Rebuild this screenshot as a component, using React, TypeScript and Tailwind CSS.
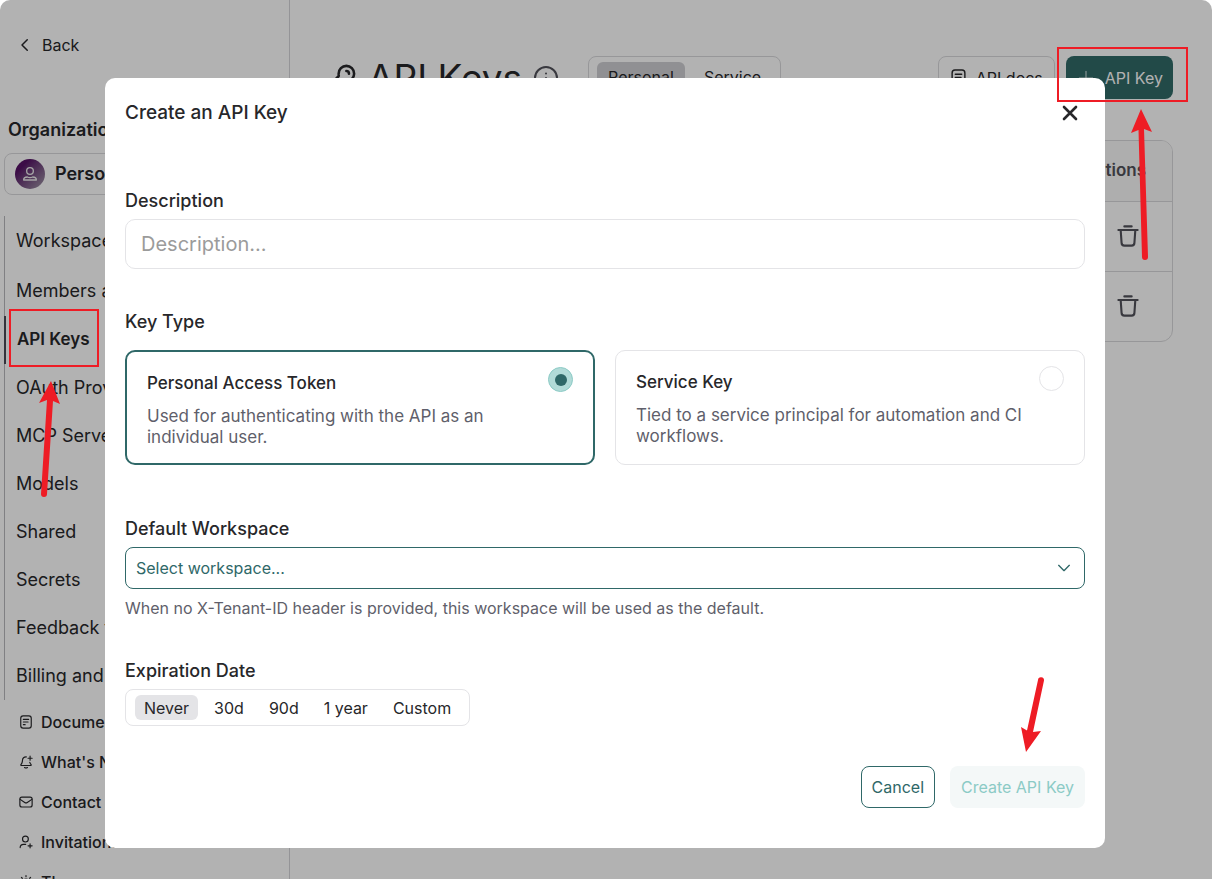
import { useState } from 'react';
import type { ReactNode } from 'react';
import clsx from 'clsx';

interface IconProps {
  className?: string;
  strokeWidth?: number;
  children: ReactNode;
}

function Icon({ className, strokeWidth = 2, children }: IconProps) {
  return (
    <svg
      viewBox="0 0 24 24"
      fill="none"
      stroke="currentColor"
      strokeWidth={strokeWidth}
      strokeLinecap="round"
      strokeLinejoin="round"
      aria-hidden="true"
      className={clsx('shrink-0', className)}
    >
      {children}
    </svg>
  );
}

// Icon shapes, all on a 24 grid
const shapes = {
  chevronLeft: <path d="M15 5l-7 7 7 7" />,
  chevronDown: <path d="M4 8l8 8 8-8" />,
  plus: <path d="M12 4v16M4 12h16" />,
  close: <path d="M4 4l16 16M20 4L4 20" />,
  key: (
    <path d="M17 9a2 2 0 0 0-2-2M15 15a6 6 0 1 0-6-6c0 .27.02.54.05.81.06.43.09.65.07.79-.02.14-.05.22-.12.34-.06.12-.18.24-.42.48L3.47 16.53c-.17.17-.26.26-.32.36-.06.09-.1.19-.12.29-.03.12-.03.24-.03.48V19.4c0 .56 0 .84.11 1.05.1.19.25.34.44.44.21.11.49.11 1.05.11H7v-2h2v-2h2l1.58-1.58c.24-.24.36-.36.48-.42.13-.07.2-.1.35-.12.13-.02.35.01.78.07.27.03.54.05.81.05z" />
  ),
  info: (
    <>
      <circle cx="12" cy="12" r="11" />
      <path d="M12 17v-5M12 7.5h.01" />
    </>
  ),
  doc: (
    <>
      <rect x="3" y="1.5" width="18" height="21" rx="4" />
      <path d="M7.5 7.5h9M7.5 12h8M7.5 16.5h3" />
    </>
  ),
  bell: (
    <>
      <path d="M12.5 3.2C8.5 3 6 5.5 6 9c0 4-1.2 5.5-2.5 7.2-.7 1-.3 1.8.8 1.8h15.4c1.1 0 1.5-.8.8-1.8-.9-1.2-1.6-2.2-2-3.7" />
      <path d="M9.5 21.5c1.5 1 3.5 1 5 0M19 2v7M15.5 5.5h7" />
    </>
  ),
  mail: (
    <>
      <rect x="1.5" y="3.5" width="21" height="17" rx="3.5" />
      <path d="M2 7.5l7.8 5.4c1.5 1 2.9 1 4.4 0L22 7.5" />
    </>
  ),
  userPlus: (
    <>
      <circle cx="11" cy="7" r="5" />
      <path d="M2 21.5c0-4 2-5.5 6-5.5h3.5M19 15v7M15.5 18.5h7" />
    </>
  ),
  sun: (
    <>
      <circle cx="12" cy="12" r="5" />
      <path d="M12 1v2M12 21v2M4.2 4.2l1.4 1.4M18.4 18.4l1.4 1.4M1 12h2M21 12h2M4.2 19.8l1.4-1.4M18.4 5.6l1.4-1.4" />
    </>
  ),
  user: (
    <>
      <circle cx="12" cy="7.5" r="5" />
      <path d="M2.5 21c0-3 3-4.5 5.5-4.5 1.3.7 2.5 1 4 1s2.700-.3 4-1c2.500 0 5.500 1.500 5.500 4.500z" />
    </>
  ),
  trash: <path d="M8 1.5h8M1.5 5.5h21M4 5.5l1 14c.1 2 1 3 3 3h8c2 0 2.900-1 3-3l1-14" />,
};

const navItems = [
  { label: 'Workspaces', height: 'h-[50px]' },
  { label: 'Members and roles', height: 'h-[50px]' },
  { label: 'API Keys', height: 'h-12', active: true },
  { label: 'OAuth Providers', height: 'h-12' },
  { label: 'MCP Servers', height: 'h-12' },
  { label: 'Models', height: 'h-12' },
  { label: 'Shared', height: 'h-12' },
  { label: 'Secrets', height: 'h-12' },
  { label: 'Feedback templates', height: 'h-12' },
  { label: 'Billing and usage', height: 'h-12' },
];

const footerLinks = [
  { label: 'Documentation', icon: shapes.doc },
  { label: "What's New", icon: shapes.bell },
  { label: 'Contact Support', icon: shapes.mail },
  { label: 'Invitations', icon: shapes.userPlus },
  { label: 'Theme', icon: shapes.sun },
];

const keyTypes = [
  {
    id: 'personal',
    title: 'Personal Access Token',
    text: 'Used for authenticating with the API as an individual user.',
  },
  {
    id: 'service',
    title: 'Service Key',
    text: 'Tied to a service principal for automation and CI workflows.',
  },
];

const expirations = ['Never', '30d', '90d', '1 year', 'Custom'];

function Sidebar() {
  return (
    <aside className="flex w-[290px] shrink-0 flex-col border-r border-[#d4d4d8] pl-1">
      <a href="#back" className="mt-[33px] flex h-6 shrink-0 items-center gap-2 pl-3 text-base">
        <Icon className="size-[18px]">{shapes.chevronLeft}</Icon>
        Back
      </a>
      <h2 className="mt-[61px] pl-1 text-lg leading-6 font-semibold">Organization</h2>
      <button
        type="button"
        className="mt-[11px] mr-4 flex h-[42px] shrink-0 items-center gap-[10px] rounded-lg border border-[#d9d9dc] pl-[10px] text-lg font-semibold"
      >
        <span className="flex size-[30px] items-center justify-center rounded-full bg-linear-to-br from-[#561266] from-25% to-[#a09aa6] text-[#eee]">
          <Icon className="size-4">{shapes.user}</Icon>
        </span>
        Personal
      </button>

      <nav className="mt-[21px] flex shrink-0 flex-col border-l border-[#b8b8bc]">
        {navItems.map((item) => (
          <a
            key={item.label}
            href="#nav"
            className={clsx(
              'flex shrink-0 items-center',
              item.height,
              item.active
                ? '-ml-px border-l-2 border-[#4a4a55] pl-[11px] text-[17px] font-semibold'
                : 'pl-[11px] text-lg',
            )}
          >
            {item.label}
          </a>
        ))}
      </nav>

      <div className="flex shrink-0 flex-col pt-0.5">
        {footerLinks.map((link) => (
          <a key={link.label} href="#link" className="flex h-10 items-center gap-2 pl-[15px] text-base font-medium">
            <Icon className="size-[14px]">{link.icon}</Icon>
            {link.label}
          </a>
        ))}
      </div>
    </aside>
  );
}

function KeysPage() {
  return (
    <main className="min-w-0 flex-1 pt-14 pr-[39px] pl-[37px]">
      <header className="flex h-[43px] items-center">
        <Icon className="size-[31px]">{shapes.key}</Icon>
        <h1 className="ml-[10px] text-[37px] leading-10">API Keys</h1>
        <Icon className="ml-3 size-6 text-[#52525b]">{shapes.info}</Icon>
        <div className="ml-[30px] flex h-[41px] items-center gap-2 self-start rounded-lg border border-[#d9d9dc] px-2 text-base">
          <button type="button" className="h-[30px] rounded-md bg-[#cfcfd3] px-[11px]">Personal</button>
          <button type="button" className="h-[30px] px-[11px]">Service</button>
        </div>
        <div className="ml-auto flex gap-[11px] text-base">
          <button type="button" className="flex h-[43px] items-center gap-[9px] rounded-lg border border-[#d9d9dc] px-[11px]">
            <Icon className="size-[17px]">{shapes.doc}</Icon>
            API docs
          </button>
          <button type="button" className="flex h-[43px] items-center gap-[9px] rounded-lg bg-[#316a68] px-[10px] text-white">
            <Icon className="size-5" strokeWidth={1}>{shapes.plus}</Icon>
            API Key
          </button>
        </div>
      </header>

      <div className="mt-[41px] overflow-hidden rounded-xl border border-[#d9d9dc]">
        <table className="w-full text-[17px]">
          <thead>
            <tr className="h-[60px] bg-[#fafafa] text-[#52525b]">
              <td />
              <th scope="col" className="w-[90px] pr-[26px] text-right font-semibold">Actions</th>
            </tr>
          </thead>
          <tbody>
            {[1, 2].map((row) => (
              <tr key={row} className="h-[70px] border-t border-[#d9d9dc]">
                <td />
                <td className="pr-[33px] text-[#52525b]">
                  <button type="button" aria-label="Delete key" className="ml-auto block">
                    <Icon className="size-[22px]" strokeWidth={2.3}>{shapes.trash}</Icon>
                  </button>
                </td>
              </tr>
            ))}
          </tbody>
        </table>
      </div>
    </main>
  );
}

function CreateKeyDialog() {
  const [keyType, setKeyType] = useState('personal');
  const [expiration, setExpiration] = useState('Never');

  return (
    <form
      role="dialog"
      aria-labelledby="dialog-title"
      className="flex w-full max-w-[1000px] flex-col rounded-[10px] bg-white px-5 pt-5 pb-10 text-[#27272a]"
    >
      <div className="flex h-[30px] items-center justify-between">
        <h2 id="dialog-title" className="text-[19px] leading-[30px] font-medium">Create an API Key</h2>
        <button type="button" aria-label="Close" className="mr-[6px]">
          <Icon className="size-[18px]" strokeWidth={3.5}>{shapes.close}</Icon>
        </button>
      </div>

      <label htmlFor="description" className="mt-[59px] text-lg font-medium">Description</label>
      <input
        id="description"
        placeholder="Description..."
        className="mt-1 h-[50px] rounded-[10px] border border-[#e4e4e7] px-[15px] text-xl placeholder:text-[#9b9b9b]"
      />

      <fieldset className="mt-[39px]">
        <legend className="text-lg font-medium">Key Type</legend>
        <div className="mt-[14px] grid grid-cols-2 gap-5">
          {keyTypes.map((type) => (
            <label
              key={type.id}
              className={clsx(
                'flex h-[115px] rounded-[10px] px-5 pt-[15px]',
                keyType === type.id ? 'border-2 border-[#2f6868]' : 'border border-[#e4e4e7]',
              )}
            >
              <span className="flex-1 pt-[3px]">
                <span className="block text-[17px] leading-[26px] font-medium">{type.title}</span>
                <span className="mt-[10px] block text-[17px] leading-[21px] text-[#5f5f6b]">{type.text}</span>
              </span>
              <input
                type="radio"
                name="key-type"
                checked={keyType === type.id}
                onChange={() => setKeyType(type.id)}
                className="flex size-[25px] appearance-none items-center justify-center rounded-full border border-[#e4e4e7] before:size-3 before:rounded-full checked:border-[#8ccbc6] checked:bg-[#b2dbd8] checked:before:bg-[#2f6868]"
              />
            </label>
          ))}
        </div>
      </fieldset>

      <label htmlFor="workspace" className="mt-[50px] text-lg font-medium">Default Workspace</label>
      <div className="relative mt-1 flex">
        <select
          id="workspace"
          className="h-[42px] w-full appearance-none rounded-lg border border-[#2f6868] bg-white px-[10px] text-base text-[#2f6868]"
        >
          <option>Select workspace...</option>
        </select>
        <span className="pointer-events-none absolute inset-y-0 right-[13px] flex items-center text-[#2f6868]">
          <Icon className="size-4">{shapes.chevronDown}</Icon>
        </span>
      </div>
      <p className="mt-[7px] text-base text-[#5f5f6b]">
        When no X-Tenant-ID header is provided, this workspace will be used as the default.
      </p>

      <h3 className="mt-[37px] text-lg font-medium">Expiration Date</h3>
      <div className="mt-1 flex h-[37px] items-center gap-[7px] self-start rounded-lg border border-[#e4e4e7] px-[9px] text-base">
        {expirations.map((option) => (
          <button
            key={option}
            type="button"
            onClick={() => setExpiration(option)}
            className={clsx('h-[25px] rounded-md px-[9px]', expiration === option && 'bg-[#e4e4e7]')}
          >
            {option}
          </button>
        ))}
      </div>

      <div className="mt-10 flex justify-end gap-[15px] text-base">
        <button type="button" className="h-[42px] rounded-lg border border-[#2f6868] px-[10px] text-[#2f6868]">
          Cancel
        </button>
        <button type="submit" disabled className="h-[42px] rounded-lg bg-[#f4f8f8] px-[11px] text-[#8ccbc6]">
          Create API Key
        </button>
      </div>
    </form>
  );
}

// Hand-drawn tutorial marks on top of everything
function Annotations() {
  return (
    <svg
      width="1213"
      height="879"
      viewBox="0 0 1213 879"
      fill="none"
      aria-hidden="true"
      className="pointer-events-none absolute top-0 left-0 max-w-none"
    >
      <g stroke="#ee1c25" strokeWidth="2">
        <rect x="10" y="310" width="88" height="56" />
        <rect x="1058" y="48" width="129" height="53" />
      </g>
      <g fill="#ee1c25">
        <path d="M51 381L60 404L53 401L47 494A3 3 0 0 1 41 494L47 400L39 403Z" />
        <path d="M1141 109L1152 132L1144 129L1148 257A3 3 0 0 1 1142 257L1138.5 130L1131 133Z" />
        <path d="M1026 752L1021 727L1027 730.5L1038 680A3 3 0 0 1 1044 680.5L1033 732L1041 731Z" />
      </g>
    </svg>
  );
}

export default function App() {
  return (
    <div className="relative h-screen overflow-hidden bg-white pr-px font-['Inter',sans-serif] text-[#27272a]">
      <div className="relative flex h-full overflow-hidden rounded-t-[10px] bg-white">
        <Sidebar />
        <KeysPage />
        <div className="absolute inset-0 flex items-start justify-center bg-black/30 pt-[78px] pr-[2px]">
          <CreateKeyDialog />
        </div>
      </div>
      <Annotations />
    </div>
  );
}
